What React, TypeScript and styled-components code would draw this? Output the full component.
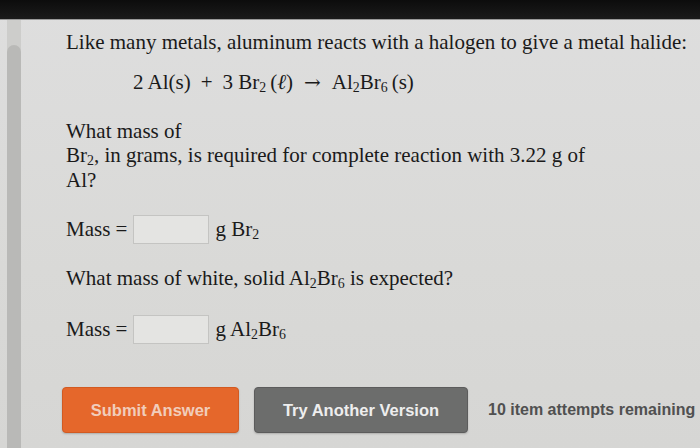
import React from 'react';
import styled, { createGlobalStyle } from 'styled-components';

const GlobalStyle = createGlobalStyle`
  html, body {
    margin: 0;
    padding: 0;
    background: #dadad8;
  }
  body {
    font-family: "Liberation Serif", "Times New Roman", serif;
    color: #1a1a1a;
  }
`;

const Screen = styled.div`
  width: 700px;
  height: 448px;
  overflow: hidden;
  display: flex;
  flex-direction: column;
  background: linear-gradient(180deg, #dedede 0%, #d9d9d7 60%, #d6d6d4 100%);
`;

const TopBar = styled.div`
  height: 19px;
  flex-shrink: 0;
  background: linear-gradient(180deg, #0c0c0c 0%, #1b1b1b 100%);
  border-bottom: 1px solid #9a9a9a;
`;

const Body = styled.div`
  flex: 1;
  display: flex;
`;

const ScrollTrack = styled.div`
  width: 14px;
  margin-left: 7px;
  flex-shrink: 0;
  background: #cdcdcb;
  padding-top: 25px;
  display: flex;
`;

const ScrollThumb = styled.div`
  flex: 1;
  background: #b9b9b7;
  border-radius: 7px 7px 0 0;
`;

const Content = styled.div`
  flex: 1;
  padding: 10px 0 0 45px;
  display: flex;
  flex-direction: column;
  font-size: 21px;
  line-height: 24px;
`;

const Para = styled.p<{ $top?: number }>`
  margin: ${(p) => p.$top ?? 0}px 0 0 0;
  white-space: nowrap;
`;

const Equation = styled.div`
  margin: 16px 0 0 67px;
  font-size: 21px;
  white-space: nowrap;
  display: flex;
  align-items: baseline;
`;

const Op = styled.span<{ $arrow?: boolean }>`
  margin: 0 ${(p) => (p.$arrow ? 11 : 10)}px;
  font-family: ${(p) => (p.$arrow ? '"DejaVu Serif", serif' : 'inherit')};
  font-size: ${(p) => (p.$arrow ? '20px' : 'inherit')};
`;

const Sub = styled.sub`
  font-size: 0.66em;
  line-height: 1;
  vertical-align: -0.22em;
`;

const Paren = styled.span`
  margin-left: 4px;
`;

const Ell = styled.span`
  font-style: italic;
`;

const AnswerRow = styled.div<{ $top: number }>`
  margin-top: ${(p) => p.$top}px;
  display: flex;
  align-items: center;
  gap: 6px;
  white-space: nowrap;
`;

const Input = styled.div`
  width: 74px;
  height: 27px;
  background: #e4e4e2;
  border: 1px solid #c4c4c2;
`;

const ButtonRow = styled.div`
  margin-top: 43px;
  margin-left: -4px;
  display: flex;
  align-items: center;
  gap: 15px;
`;

const Button = styled.div<{ $variant: 'submit' | 'other' }>`
  height: 44px;
  display: flex;
  align-items: center;
  justify-content: center;
  border-radius: 4px;
  font-family: "Liberation Sans", Arial, sans-serif;
  font-weight: bold;
  font-size: 16.5px;
  width: ${(p) => (p.$variant === 'submit' ? 175 : 212)}px;
  background: ${(p) => (p.$variant === 'submit' ? '#e5672b' : '#6c6d6c')};
  color: ${(p) => (p.$variant === 'submit' ? '#f1cdbb' : '#eeeeee')};
  border: 1px solid ${(p) => (p.$variant === 'submit' ? '#d25a21' : '#5c5c5c')};
  box-shadow: 0 1px 2px rgba(0, 0, 0, 0.2);
`;

const Attempts = styled.span`
  margin-left: 5px;
  font-family: "Liberation Sans", Arial, sans-serif;
  font-weight: bold;
  font-size: 16px;
  color: #505050;
  white-space: nowrap;
`;

const App: React.FC = () => {
  return (
    <>
      <GlobalStyle />
      <Screen>
        <TopBar />
        <Body>
          <ScrollTrack>
            <ScrollThumb />
          </ScrollTrack>
          <Content>
            <Para>Like many metals, aluminum reacts with a halogen to give a metal halide:</Para>
            <Equation>
              <span>2 Al(s)</span>
              <Op>+</Op>
              <span>
                3 Br<Sub>2</Sub>
                <Paren>
                  (<Ell>ℓ</Ell>)
                </Paren>
              </span>
              <Op $arrow>→</Op>
              <span>
                Al<Sub>2</Sub>Br<Sub>6</Sub>
                <Paren>(s)</Paren>
              </span>
            </Equation>
            <Para $top={24}>What mass of</Para>
            <Para>
              Br<Sub>2</Sub>, in grams, is required for complete reaction with 3.22 g of
            </Para>
            <Para>Al?</Para>
            <AnswerRow $top={23}>
              <span>Mass =</span>
              <Input />
              <span>
                g Br<Sub>2</Sub>
              </span>
            </AnswerRow>
            <Para $top={22}>
              What mass of white, solid Al<Sub>2</Sub>Br<Sub>6</Sub> is expected?
            </Para>
            <AnswerRow $top={24}>
              <span>Mass =</span>
              <Input />
              <span>
                g Al<Sub>2</Sub>Br<Sub>6</Sub>
              </span>
            </AnswerRow>
            <ButtonRow>
              <Button $variant="submit">Submit Answer</Button>
              <Button $variant="other">Try Another Version</Button>
              <Attempts>10 item attempts remaining</Attempts>
            </ButtonRow>
          </Content>
        </Body>
      </Screen>
    </>
  );
};

export default App;
